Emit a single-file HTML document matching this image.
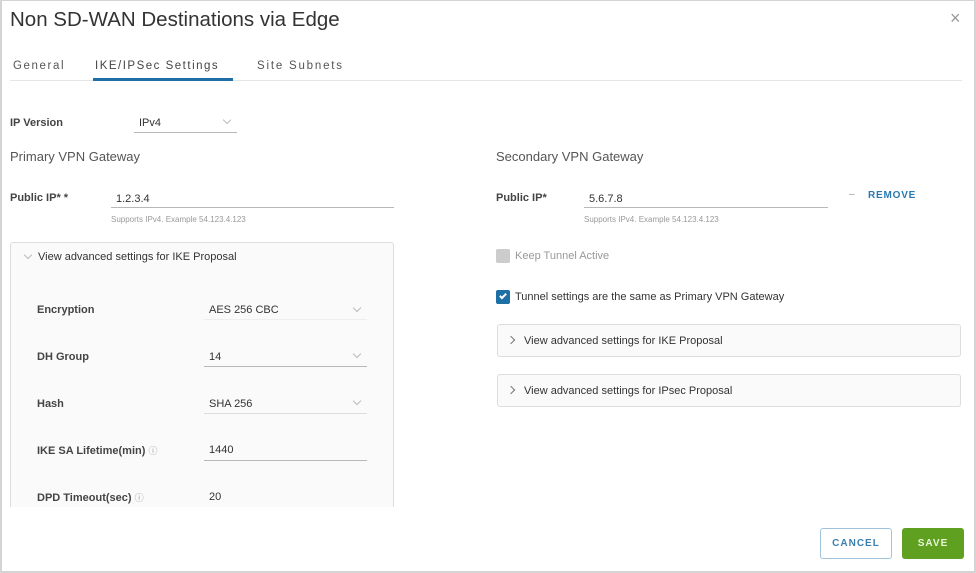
<!DOCTYPE html>
<html><head><style>
*{margin:0;padding:0;box-sizing:border-box}
body{width:976px;height:573px;background:#fff;font-family:"Liberation Sans",sans-serif;color:#333;position:relative;overflow:hidden}
.frame{position:absolute;left:0;top:0;width:976px;height:573px;border:2px solid #d4d4d4;border-top-width:1px}
.a{position:absolute;white-space:nowrap}
.lbl{font-size:11px;font-weight:bold;color:#444}
.val{font-size:11px;color:#333}
.ul{position:absolute;height:1px;background:#b8b8b8}
.hint{font-size:8px;color:#999}
.chev{position:absolute;width:6px;height:6px;border-right:1px solid #bbb;border-bottom:1px solid #bbb;transform:rotate(45deg)}
.box{position:absolute;border:1px solid #ddd;background:#fafafa;border-radius:3px}
</style></head><body>
<div class="frame"></div>
<div class="a" style="left:10px;top:8px;font-size:20.5px;color:#333">Non SD-WAN Destinations via Edge</div>
<div class="a" style="left:950px;top:8px;font-size:18px;color:#999">×</div>
<div class="a" style="left:13px;top:60px;font-size:11.5px;letter-spacing:1.6px;color:#555">General</div>
<div class="a" style="left:95px;top:60px;font-size:11.5px;letter-spacing:1.5px;color:#444">IKE/IPSec Settings</div>
<div class="a" style="left:257px;top:60px;font-size:11.5px;letter-spacing:1.8px;color:#555">Site Subnets</div>
<div class="ul" style="left:10px;top:80px;width:952px;background:#e6e6e6"></div>
<div class="a" style="left:93px;top:78px;width:140px;height:3px;background:#1e6fa6"></div>

<div class="a lbl" style="left:10px;top:117px">IP Version</div>
<div class="a val" style="left:139px;top:117px">IPv4</div>
<div class="chev" style="left:224px;top:117px"></div>
<div class="ul" style="left:134px;top:132px;width:103px"></div>
<div class="a" style="left:10px;top:149px;font-size:13px;color:#555">Primary VPN Gateway</div>
<div class="a lbl" style="left:10px;top:192px">Public IP* *</div>
<div class="a val" style="left:116px;top:193px">1.2.3.4</div>
<div class="ul" style="left:111px;top:207px;width:283px"></div>
<div class="a hint" style="left:111px;top:215px">Supports IPv4. Example 54.123.4.123</div>

<div class="box" style="left:10px;top:242px;width:384px;height:300px"></div>
<div class="chev" style="left:25px;top:252px"></div>
<div class="a val" style="left:38px;top:251px">View advanced settings for IKE Proposal</div>
<div class="a lbl" style="left:37px;top:304px">Encryption</div>
<div class="a val" style="left:209px;top:304px">AES 256 CBC</div>
<div class="chev" style="left:354px;top:305px"></div>
<div class="ul" style="left:204px;top:319px;width:163px;background:#eee"></div>
<div class="a lbl" style="left:37px;top:351px">DH Group</div>
<div class="a val" style="left:209px;top:351px">14</div>
<div class="chev" style="left:354px;top:351px"></div>
<div class="ul" style="left:204px;top:366px;width:163px"></div>
<div class="a lbl" style="left:37px;top:398px">Hash</div>
<div class="a val" style="left:209px;top:398px">SHA 256</div>
<div class="chev" style="left:354px;top:398px"></div>
<div class="ul" style="left:204px;top:413px;width:163px;background:#ddd"></div>
<div class="a lbl" style="left:37px;top:444px">IKE SA Lifetime(min) <span style="font-weight:normal;color:#999;font-size:9px">ⓘ</span></div>
<div class="a val" style="left:209px;top:444px">1440</div>
<div class="ul" style="left:204px;top:460px;width:163px"></div>
<div class="a lbl" style="left:37px;top:491px">DPD Timeout(sec) <span style="font-weight:normal;color:#999;font-size:9px">ⓘ</span></div>
<div class="a val" style="left:209px;top:491px">20</div>
<div class="a" style="left:2px;top:507px;width:972px;height:64px;background:#fff"></div>

<div class="a" style="left:496px;top:149px;font-size:13px;color:#555">Secondary VPN Gateway</div>
<div class="a lbl" style="left:496px;top:192px">Public IP*</div>
<div class="a val" style="left:589px;top:193px">5.6.7.8</div>
<div class="ul" style="left:584px;top:207px;width:244px"></div>
<div class="a hint" style="left:584px;top:215px">Supports IPv4. Example 54.123.4.123</div>
<div class="a" style="left:849px;top:189px;font-size:10px;color:#999">–</div>
<div class="a" style="left:868px;top:190px;font-size:10px;font-weight:bold;letter-spacing:.8px;color:#2a7ab0">REMOVE</div>
<div class="a" style="left:496px;top:249px;width:14px;height:14px;background:#ccc;border-radius:2px"></div>
<div class="a val" style="left:515px;top:250px;color:#999">Keep Tunnel Active</div>
<div class="a" style="left:496px;top:290px;width:14px;height:14px;background:#1e6fa6;border-radius:2px"><div style="position:absolute;left:5px;top:2px;width:4px;height:7px;border-right:2px solid #fff;border-bottom:2px solid #fff;transform:rotate(45deg)"></div></div>
<div class="a val" style="left:515px;top:291px">Tunnel settings are the same as Primary VPN Gateway</div>
<div class="box" style="left:497px;top:324px;width:464px;height:33px"></div>
<div class="chev" style="left:508px;top:337px;transform:rotate(-45deg);border-color:#777"></div>
<div class="a val" style="left:524px;top:335px">View advanced settings for IKE Proposal</div>
<div class="box" style="left:497px;top:374px;width:464px;height:33px"></div>
<div class="chev" style="left:508px;top:387px;transform:rotate(-45deg);border-color:#777"></div>
<div class="a val" style="left:524px;top:385px">View advanced settings for IPsec Proposal</div>

<div class="a" style="left:820px;top:528px;width:72px;height:31px;border:1px solid #9fc3dd;border-radius:3px;font-size:10px;font-weight:bold;letter-spacing:1px;color:#3b7fae;text-align:center;line-height:29px">CANCEL</div>
<div class="a" style="left:902px;top:528px;width:62px;height:31px;background:#60a020;border-radius:3px;font-size:10px;font-weight:bold;letter-spacing:1px;color:#e8f5d8;text-align:center;line-height:31px">SAVE</div>
</body></html>
